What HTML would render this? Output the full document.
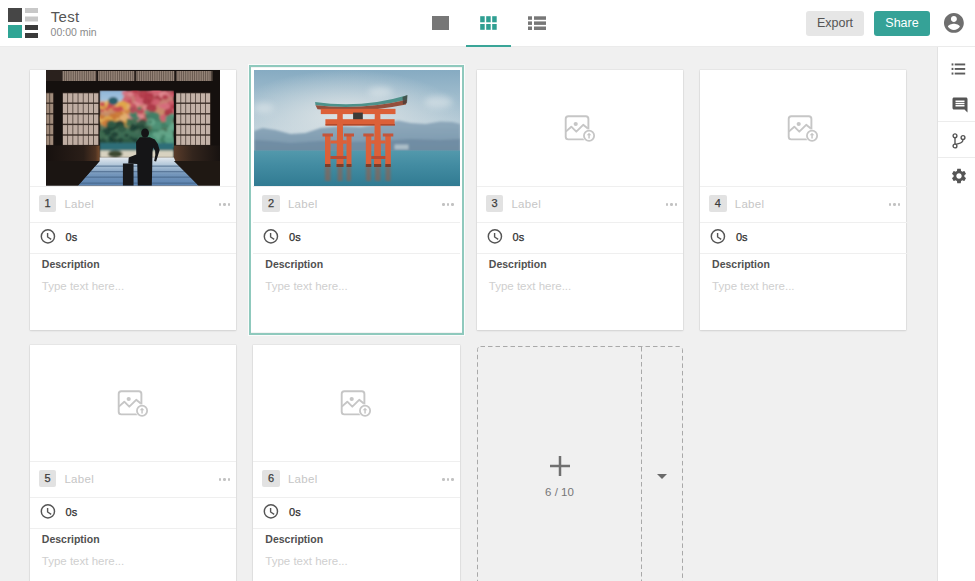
<!DOCTYPE html>
<html><head><meta charset="utf-8">
<style>
*{margin:0;padding:0;box-sizing:border-box}
html,body{width:975px;height:581px;overflow:hidden;background:#f0f0f0;font-family:"Liberation Sans",sans-serif;position:relative}
.hdr{position:absolute;left:0;top:0;width:975px;height:47px;background:#fff;border-bottom:1px solid #ebebeb}
.logo{position:absolute}
.title{position:absolute;left:50.8px;top:8px;font-size:15px;color:#555;line-height:18px;letter-spacing:0.25px}
.sub{position:absolute;left:50.6px;top:26px;font-size:10.5px;color:#8a8a8a;line-height:12px}
.vi{position:absolute}
.uline{position:absolute;left:466px;top:44.5px;width:45px;height:2px;background:#3aa598}
.btn{position:absolute;top:10.7px;height:25px;border-radius:3px;font-size:12.5px;line-height:24.5px;text-align:center}
.exp{left:806px;width:58px;background:#e6e6e6;color:#555}
.shr{left:874px;width:56px;background:#35a297;color:#fff}
.side{position:absolute;left:937px;top:47px;width:38px;height:534px;background:#fff;border-left:1px solid #e2e2e2}
.sside{position:absolute;left:0;width:37px;height:1px;background:#ececec}
.card{position:absolute;width:206.3px;height:260.6px;background:#fff;box-shadow:0 0 0 0.5px rgba(0,0,0,0.07),0 1px 2px rgba(0,0,0,0.1)}

.card.sel{box-shadow:0 0 0 2.2px #fff}
.card.sel::after{content:"";position:absolute;left:-4.5px;top:-4.5px;right:-4.5px;bottom:-4.5px;border:2.5px solid #8fc9bd;box-shadow:0 0 0 1px rgba(255,255,255,0.7)}
.card.sel .img{left:0.5px;width:206px}
.img{position:absolute;left:0;top:0.5px;width:206.5px;height:115.5px;overflow:hidden}
.ph{position:absolute;left:83px;top:40.5px}
.sep{position:absolute;left:0;width:206.5px;height:1px;background:#efefef}
.badge{position:absolute;left:9px;top:125px;width:17.5px;height:17.5px;border-radius:2px;background:#e2e2e2;color:#3c3c3c;font-size:11px;-webkit-text-stroke:0.25px #3c3c3c;line-height:17.5px;text-align:center}
.lbl{position:absolute;left:34.6px;top:127px;font-size:11.5px;line-height:14px;color:#c6c6c6;letter-spacing:0.3px}
.dots{position:absolute;left:188.85px;top:133.6px;width:12px;height:2.5px}
.dots i{position:absolute;top:0;width:2.5px;height:2.5px;border-radius:1.25px;background:#c2c2c2}
.dots i:nth-child(1){left:0}.dots i:nth-child(2){left:4.4px}.dots i:nth-child(3){left:9px}
.clk{position:absolute;left:9px;top:158.5px}
.dur{position:absolute;left:35.8px;top:160px;font-size:11px;line-height:14px;color:#2e2e2e;-webkit-text-stroke:0.25px #2e2e2e}
.dh{position:absolute;left:12px;top:187.5px;font-size:10.5px;line-height:14px;color:#505050;font-weight:bold}
.dt{position:absolute;left:12px;top:209px;font-size:11.5px;line-height:14px;color:#cfcfcf}
.add{position:absolute;left:477px;top:345.5px;width:207px;height:240px}
.add .div{position:absolute;left:164px;top:0;width:0;height:300px;border-left:1px dashed #b5b5b5}
.plus{position:absolute}
.cnt{position:absolute;left:0.5px;width:164px;top:139px;text-align:center;font-size:11.5px;line-height:14px;color:#777}
.tri{position:absolute;left:180px;top:128.5px;width:0;height:0;border-left:5px solid transparent;border-right:5px solid transparent;border-top:5px solid #6a6a6a}
</style></head>
<body>
<div class="hdr">
  <svg class="logo" style="left:8px;top:8px" width="31" height="31" viewBox="0 0 31 31">
    <rect x="0" y="0" width="14" height="14" fill="#464646"/>
    <rect x="0" y="17" width="14" height="13" fill="#2fa595"/>
    <rect x="17" y="0" width="13" height="5" fill="#c8c8c8"/>
    <rect x="17" y="8.5" width="13" height="5" fill="#c8c8c8"/>
    <rect x="17" y="17" width="13" height="5" fill="#3a3a3a"/>
    <rect x="17" y="25" width="13" height="5" fill="#3a3a3a"/>
  </svg>
  <div class="title">Test</div>
  <div class="sub">00:00 min</div>
  <svg class="vi" style="left:432px;top:16px" width="17" height="14"><rect width="17" height="14" fill="#777"/></svg>
  <svg class="vi" style="left:480px;top:16px" width="17" height="14" fill="#2f9f92"><rect x="0.2" y="0.2" width="4.5" height="6.1"/><rect x="6.2" y="0.2" width="4.5" height="6.1"/><rect x="12.2" y="0.2" width="4.5" height="6.1"/><rect x="0.2" y="8" width="4.5" height="5.8"/><rect x="6.2" y="8" width="4.5" height="5.8"/><rect x="12.2" y="8" width="4.5" height="5.8"/></svg>
  <svg class="vi" style="left:528px;top:16px" width="18" height="14" fill="#777">
    <rect x="0" y="0.3" width="4" height="3.5"/><rect x="6" y="0.3" width="12" height="3.5"/>
    <rect x="0" y="5.4" width="4" height="3.5"/><rect x="6" y="5.4" width="12" height="3.5"/>
    <rect x="0" y="10.5" width="4" height="3.5"/><rect x="6" y="10.5" width="12" height="3.5"/>
  </svg>
  <div class="uline"></div>
  <div class="btn exp">Export</div>
  <div class="btn shr">Share</div>
  <svg class="vi" style="left:942.1px;top:11.3px" width="23.8" height="23.8" viewBox="0 0 24 24"><path fill="#6f6f6f" d="M12 2C6.48 2 2 6.48 2 12s4.48 10 10 10 10-4.48 10-10S17.52 2 12 2zm0 3c1.66 0 3 1.34 3 3s-1.34 3-3 3-3-1.34-3-3 1.34-3 3-3zm0 14.2c-2.5 0-4.71-1.28-6-3.22.03-1.99 4-3.08 6-3.08 1.99 0 5.97 1.09 6 3.08-1.29 1.94-3.5 3.22-6 3.22z"/></svg>
</div>
<div class="side">
  <svg class="vi" style="left:13px;top:15.5px" width="16" height="12" fill="#5c5c5c"><rect x="0.6" y="0.4" width="1.8" height="2.1"/><rect x="3.7" y="0.5" width="10.5" height="1.9"/><rect x="0.6" y="4.9" width="1.8" height="2.1"/><rect x="3.7" y="5" width="10.5" height="1.9"/><rect x="0.6" y="9.5" width="1.8" height="2.1"/><rect x="3.7" y="9.6" width="10.5" height="1.9"/></svg>
  <svg class="vi" style="left:12.5px;top:48.5px" width="18" height="18" viewBox="0 0 24 24"><path fill="#555" d="M20 2H4c-1.1 0-2 .9-2 2v12c0 1.1.9 2 2 2h14l4 4V4c0-1.1-.9-2-2-2zm-2 12H6v-2h12v2zm0-3H6V9h12v2zm0-3H6V6h12v2z"/></svg>
  <div class="sside" style="top:73.5px"></div>
  <svg class="vi" style="left:13.5px;top:85.8px" width="14" height="16" viewBox="0 0 14 16"><g fill="none" stroke="#555" stroke-width="1.4"><circle cx="3" cy="2.8" r="1.9"/><circle cx="3" cy="13" r="1.9"/><circle cx="11" cy="4.5" r="1.9"/><path d="M3 4.7v6.4M11 6.4c0 3-2 3.6-4.5 4.2L3.6 11.4"/></g></svg>
  <div class="sside" style="top:110px"></div>
  <svg class="vi" style="left:11.6px;top:120.3px" width="18" height="18" viewBox="0 0 24 24"><path fill="#555" d="M19.14 12.94c.04-.3.06-.61.06-.94 0-.32-.02-.64-.07-.94l2.03-1.58c.18-.14.23-.41.12-.61l-1.92-3.32c-.12-.22-.37-.29-.59-.22l-2.39.96c-.5-.38-1.03-.7-1.62-.94l-.36-2.54c-.04-.24-.24-.41-.48-.41h-3.84c-.24 0-.43.17-.47.41l-.36 2.54c-.59.24-1.13.57-1.62.94l-2.39-.96c-.22-.08-.47 0-.59.22L2.74 8.87c-.12.21-.08.47.12.61l2.03 1.58c-.05.3-.09.63-.09.94s.02.64.07.94l-2.03 1.58c-.18.14-.23.41-.12.61l1.920 3.32c.12.22.37.29.59.22l2.39-.96c.5.38 1.03.7 1.620.94l.36 2.54c.05.24.24.41.48.41h3.84c.24 0 .44-.17.47-.41l.36-2.54c.59-.24 1.13-.56 1.62-.94l2.39.96c.22.08.47 0 .59-.22l1.92-3.32c.12-.22.07-.47-.12-.61l-2.01-1.58zM12 15.6c-1.98 0-3.6-1.62-3.6-3.6s1.62-3.6 3.6-3.6 3.6 1.62 3.6 3.6-1.62 3.6-3.6 3.6z"/></svg>
</div>
<div class="card" style="left:29.8px;top:69.5px">
  <div class="img"><svg width="174.5" height="116" viewBox="0 0 174 116" preserveAspectRatio="none" style="position:absolute;left:16px;top:0"><defs><linearGradient id="p1sky" x1="0" y1="0" x2="0" y2="1"><stop offset="0" stop-color="#8fb6d8"/><stop offset="1" stop-color="#b5cde0"/></linearGradient><linearGradient id="p1wallL" x1="0" y1="0" x2="1" y2="0"><stop offset="0" stop-color="#17110f"/><stop offset="0.7" stop-color="#2a1e18"/><stop offset="0.92" stop-color="#4e3322"/><stop offset="1" stop-color="#7a4e2e"/></linearGradient><linearGradient id="p1wallR" x1="0" y1="0" x2="1" y2="0"><stop offset="0" stop-color="#5a3c2a"/><stop offset="0.4" stop-color="#33251d"/><stop offset="1" stop-color="#171210"/></linearGradient><linearGradient id="p1floor" x1="0" y1="0" x2="0" y2="1"><stop offset="0" stop-color="#e4e9ee"/><stop offset="0.25" stop-color="#b4c8da"/><stop offset="0.6" stop-color="#7496bb"/><stop offset="1" stop-color="#5a82b0"/></linearGradient><linearGradient id="p1trees" x1="0" y1="0" x2="0" y2="1"><stop offset="0" stop-color="#c8707a"/><stop offset="0.35" stop-color="#c98f6a"/><stop offset="0.6" stop-color="#3f6f55"/><stop offset="1" stop-color="#2a5a4a"/></linearGradient><clipPath id="p1clip"><rect x="53.5" y="20.5" width="74" height="67.5"/></clipPath><filter id="p1blur" x="-10%" y="-10%" width="120%" height="120%"><feGaussianBlur stdDeviation="1.2"/></filter></defs><rect x="0.00" y="0.00" width="174.00" height="115.50" fill="#15100e" /><rect x="0.00" y="0.00" width="16.50" height="11.00" fill="#2a211d" /><rect x="16.50" y="1.00" width="148.50" height="10.00" fill="#948377" /><rect x="18.00" y="1.00" width="0.70" height="10.00" fill="#5a4c43" /><rect x="20.20" y="1.00" width="0.70" height="10.00" fill="#5a4c43" /><rect x="22.40" y="1.00" width="0.70" height="10.00" fill="#5a4c43" /><rect x="24.60" y="1.00" width="0.70" height="10.00" fill="#5a4c43" /><rect x="26.80" y="1.00" width="0.70" height="10.00" fill="#5a4c43" /><rect x="29.00" y="1.00" width="0.70" height="10.00" fill="#5a4c43" /><rect x="31.20" y="1.00" width="0.70" height="10.00" fill="#5a4c43" /><rect x="33.40" y="1.00" width="0.70" height="10.00" fill="#5a4c43" /><rect x="35.60" y="1.00" width="0.70" height="10.00" fill="#5a4c43" /><rect x="37.80" y="1.00" width="0.70" height="10.00" fill="#5a4c43" /><rect x="40.00" y="1.00" width="0.70" height="10.00" fill="#5a4c43" /><rect x="42.20" y="1.00" width="0.70" height="10.00" fill="#5a4c43" /><rect x="44.40" y="1.00" width="0.70" height="10.00" fill="#5a4c43" /><rect x="46.60" y="1.00" width="0.70" height="10.00" fill="#5a4c43" /><rect x="48.80" y="1.00" width="0.70" height="10.00" fill="#5a4c43" /><rect x="51.00" y="1.00" width="0.70" height="10.00" fill="#5a4c43" /><rect x="53.20" y="1.00" width="0.70" height="10.00" fill="#5a4c43" /><rect x="55.40" y="1.00" width="0.70" height="10.00" fill="#5a4c43" /><rect x="57.60" y="1.00" width="0.70" height="10.00" fill="#5a4c43" /><rect x="59.80" y="1.00" width="0.70" height="10.00" fill="#5a4c43" /><rect x="62.00" y="1.00" width="0.70" height="10.00" fill="#5a4c43" /><rect x="64.20" y="1.00" width="0.70" height="10.00" fill="#5a4c43" /><rect x="66.40" y="1.00" width="0.70" height="10.00" fill="#5a4c43" /><rect x="68.60" y="1.00" width="0.70" height="10.00" fill="#5a4c43" /><rect x="70.80" y="1.00" width="0.70" height="10.00" fill="#5a4c43" /><rect x="73.00" y="1.00" width="0.70" height="10.00" fill="#5a4c43" /><rect x="75.20" y="1.00" width="0.70" height="10.00" fill="#5a4c43" /><rect x="77.40" y="1.00" width="0.70" height="10.00" fill="#5a4c43" /><rect x="79.60" y="1.00" width="0.70" height="10.00" fill="#5a4c43" /><rect x="81.80" y="1.00" width="0.70" height="10.00" fill="#5a4c43" /><rect x="84.00" y="1.00" width="0.70" height="10.00" fill="#5a4c43" /><rect x="86.20" y="1.00" width="0.70" height="10.00" fill="#5a4c43" /><rect x="88.40" y="1.00" width="0.70" height="10.00" fill="#5a4c43" /><rect x="90.60" y="1.00" width="0.70" height="10.00" fill="#5a4c43" /><rect x="92.80" y="1.00" width="0.70" height="10.00" fill="#5a4c43" /><rect x="95.00" y="1.00" width="0.70" height="10.00" fill="#5a4c43" /><rect x="97.20" y="1.00" width="0.70" height="10.00" fill="#5a4c43" /><rect x="99.40" y="1.00" width="0.70" height="10.00" fill="#5a4c43" /><rect x="101.60" y="1.00" width="0.70" height="10.00" fill="#5a4c43" /><rect x="103.80" y="1.00" width="0.70" height="10.00" fill="#5a4c43" /><rect x="106.00" y="1.00" width="0.70" height="10.00" fill="#5a4c43" /><rect x="108.20" y="1.00" width="0.70" height="10.00" fill="#5a4c43" /><rect x="110.40" y="1.00" width="0.70" height="10.00" fill="#5a4c43" /><rect x="112.60" y="1.00" width="0.70" height="10.00" fill="#5a4c43" /><rect x="114.80" y="1.00" width="0.70" height="10.00" fill="#5a4c43" /><rect x="117.00" y="1.00" width="0.70" height="10.00" fill="#5a4c43" /><rect x="119.20" y="1.00" width="0.70" height="10.00" fill="#5a4c43" /><rect x="121.40" y="1.00" width="0.70" height="10.00" fill="#5a4c43" /><rect x="123.60" y="1.00" width="0.70" height="10.00" fill="#5a4c43" /><rect x="125.80" y="1.00" width="0.70" height="10.00" fill="#5a4c43" /><rect x="128.00" y="1.00" width="0.70" height="10.00" fill="#5a4c43" /><rect x="130.20" y="1.00" width="0.70" height="10.00" fill="#5a4c43" /><rect x="132.40" y="1.00" width="0.70" height="10.00" fill="#5a4c43" /><rect x="134.60" y="1.00" width="0.70" height="10.00" fill="#5a4c43" /><rect x="136.80" y="1.00" width="0.70" height="10.00" fill="#5a4c43" /><rect x="139.00" y="1.00" width="0.70" height="10.00" fill="#5a4c43" /><rect x="141.20" y="1.00" width="0.70" height="10.00" fill="#5a4c43" /><rect x="143.40" y="1.00" width="0.70" height="10.00" fill="#5a4c43" /><rect x="145.60" y="1.00" width="0.70" height="10.00" fill="#5a4c43" /><rect x="147.80" y="1.00" width="0.70" height="10.00" fill="#5a4c43" /><rect x="150.00" y="1.00" width="0.70" height="10.00" fill="#5a4c43" /><rect x="152.20" y="1.00" width="0.70" height="10.00" fill="#5a4c43" /><rect x="154.40" y="1.00" width="0.70" height="10.00" fill="#5a4c43" /><rect x="156.60" y="1.00" width="0.70" height="10.00" fill="#5a4c43" /><rect x="158.80" y="1.00" width="0.70" height="10.00" fill="#5a4c43" /><rect x="161.00" y="1.00" width="0.70" height="10.00" fill="#5a4c43" /><rect x="163.20" y="1.00" width="0.70" height="10.00" fill="#5a4c43" /><rect x="165.40" y="1.00" width="0.70" height="10.00" fill="#5a4c43" /><rect x="50.00" y="1.00" width="2.00" height="10.00" fill="#1e1714" /><rect x="128.00" y="1.00" width="2.00" height="10.00" fill="#1e1714" /><rect x="88.00" y="1.00" width="2.00" height="10.00" fill="#2a211c" /><rect x="0.00" y="22.50" width="7.50" height="53.00" fill="#3b2f28" /><rect x="0.35" y="23.30" width="3.05" height="9.20" fill="#a08b7b" /><rect x="0.35" y="33.90" width="3.05" height="9.20" fill="#a08b7b" /><rect x="0.35" y="44.50" width="3.05" height="9.20" fill="#a08b7b" /><rect x="0.35" y="55.10" width="3.05" height="9.20" fill="#a08b7b" /><rect x="0.35" y="65.70" width="3.05" height="9.20" fill="#a08b7b" /><rect x="4.10" y="23.30" width="3.05" height="9.20" fill="#a08b7b" /><rect x="4.10" y="33.90" width="3.05" height="9.20" fill="#a08b7b" /><rect x="4.10" y="44.50" width="3.05" height="9.20" fill="#a08b7b" /><rect x="4.10" y="55.10" width="3.05" height="9.20" fill="#a08b7b" /><rect x="4.10" y="65.70" width="3.05" height="9.20" fill="#a08b7b" /><rect x="16.50" y="22.50" width="36.00" height="53.00" fill="#3b2f28" /><rect x="16.85" y="23.30" width="4.44" height="9.20" fill="#bfada2" /><rect x="16.85" y="33.90" width="4.44" height="9.20" fill="#bfada2" /><rect x="16.85" y="44.50" width="4.44" height="9.20" fill="#bfada2" /><rect x="16.85" y="55.10" width="4.44" height="9.20" fill="#bfada2" /><rect x="16.85" y="65.70" width="4.44" height="9.20" fill="#bfada2" /><rect x="21.99" y="23.30" width="4.44" height="9.20" fill="#bfada2" /><rect x="21.99" y="33.90" width="4.44" height="9.20" fill="#bfada2" /><rect x="21.99" y="44.50" width="4.44" height="9.20" fill="#bfada2" /><rect x="21.99" y="55.10" width="4.44" height="9.20" fill="#bfada2" /><rect x="21.99" y="65.70" width="4.44" height="9.20" fill="#bfada2" /><rect x="27.14" y="23.30" width="4.44" height="9.20" fill="#bfada2" /><rect x="27.14" y="33.90" width="4.44" height="9.20" fill="#bfada2" /><rect x="27.14" y="44.50" width="4.44" height="9.20" fill="#bfada2" /><rect x="27.14" y="55.10" width="4.44" height="9.20" fill="#bfada2" /><rect x="27.14" y="65.70" width="4.44" height="9.20" fill="#bfada2" /><rect x="32.28" y="23.30" width="4.44" height="9.20" fill="#bfada2" /><rect x="32.28" y="33.90" width="4.44" height="9.20" fill="#bfada2" /><rect x="32.28" y="44.50" width="4.44" height="9.20" fill="#bfada2" /><rect x="32.28" y="55.10" width="4.44" height="9.20" fill="#bfada2" /><rect x="32.28" y="65.70" width="4.44" height="9.20" fill="#bfada2" /><rect x="37.42" y="23.30" width="4.44" height="9.20" fill="#bfada2" /><rect x="37.42" y="33.90" width="4.44" height="9.20" fill="#bfada2" /><rect x="37.42" y="44.50" width="4.44" height="9.20" fill="#bfada2" /><rect x="37.42" y="55.10" width="4.44" height="9.20" fill="#bfada2" /><rect x="37.42" y="65.70" width="4.44" height="9.20" fill="#bfada2" /><rect x="42.56" y="23.30" width="4.44" height="9.20" fill="#bfada2" /><rect x="42.56" y="33.90" width="4.44" height="9.20" fill="#bfada2" /><rect x="42.56" y="44.50" width="4.44" height="9.20" fill="#bfada2" /><rect x="42.56" y="55.10" width="4.44" height="9.20" fill="#bfada2" /><rect x="42.56" y="65.70" width="4.44" height="9.20" fill="#bfada2" /><rect x="47.71" y="23.30" width="4.44" height="9.20" fill="#bfada2" /><rect x="47.71" y="33.90" width="4.44" height="9.20" fill="#bfada2" /><rect x="47.71" y="44.50" width="4.44" height="9.20" fill="#bfada2" /><rect x="47.71" y="55.10" width="4.44" height="9.20" fill="#bfada2" /><rect x="47.71" y="65.70" width="4.44" height="9.20" fill="#bfada2" /><rect x="129.50" y="22.50" width="34.50" height="53.00" fill="#3b2f28" /><rect x="129.85" y="23.30" width="4.23" height="9.20" fill="#c3b2a7" /><rect x="129.85" y="33.90" width="4.23" height="9.20" fill="#c3b2a7" /><rect x="129.85" y="44.50" width="4.23" height="9.20" fill="#c3b2a7" /><rect x="129.85" y="55.10" width="4.23" height="9.20" fill="#c3b2a7" /><rect x="129.85" y="65.70" width="4.23" height="9.20" fill="#c3b2a7" /><rect x="134.78" y="23.30" width="4.23" height="9.20" fill="#c3b2a7" /><rect x="134.78" y="33.90" width="4.23" height="9.20" fill="#c3b2a7" /><rect x="134.78" y="44.50" width="4.23" height="9.20" fill="#c3b2a7" /><rect x="134.78" y="55.10" width="4.23" height="9.20" fill="#c3b2a7" /><rect x="134.78" y="65.70" width="4.23" height="9.20" fill="#c3b2a7" /><rect x="139.71" y="23.30" width="4.23" height="9.20" fill="#c3b2a7" /><rect x="139.71" y="33.90" width="4.23" height="9.20" fill="#c3b2a7" /><rect x="139.71" y="44.50" width="4.23" height="9.20" fill="#c3b2a7" /><rect x="139.71" y="55.10" width="4.23" height="9.20" fill="#c3b2a7" /><rect x="139.71" y="65.70" width="4.23" height="9.20" fill="#c3b2a7" /><rect x="144.64" y="23.30" width="4.23" height="9.20" fill="#c3b2a7" /><rect x="144.64" y="33.90" width="4.23" height="9.20" fill="#c3b2a7" /><rect x="144.64" y="44.50" width="4.23" height="9.20" fill="#c3b2a7" /><rect x="144.64" y="55.10" width="4.23" height="9.20" fill="#c3b2a7" /><rect x="144.64" y="65.70" width="4.23" height="9.20" fill="#c3b2a7" /><rect x="149.56" y="23.30" width="4.23" height="9.20" fill="#c3b2a7" /><rect x="149.56" y="33.90" width="4.23" height="9.20" fill="#c3b2a7" /><rect x="149.56" y="44.50" width="4.23" height="9.20" fill="#c3b2a7" /><rect x="149.56" y="55.10" width="4.23" height="9.20" fill="#c3b2a7" /><rect x="149.56" y="65.70" width="4.23" height="9.20" fill="#c3b2a7" /><rect x="154.49" y="23.30" width="4.23" height="9.20" fill="#c3b2a7" /><rect x="154.49" y="33.90" width="4.23" height="9.20" fill="#c3b2a7" /><rect x="154.49" y="44.50" width="4.23" height="9.20" fill="#c3b2a7" /><rect x="154.49" y="55.10" width="4.23" height="9.20" fill="#c3b2a7" /><rect x="154.49" y="65.70" width="4.23" height="9.20" fill="#c3b2a7" /><rect x="159.42" y="23.30" width="4.23" height="9.20" fill="#c3b2a7" /><rect x="159.42" y="33.90" width="4.23" height="9.20" fill="#c3b2a7" /><rect x="159.42" y="44.50" width="4.23" height="9.20" fill="#c3b2a7" /><rect x="159.42" y="55.10" width="4.23" height="9.20" fill="#c3b2a7" /><rect x="159.42" y="65.70" width="4.23" height="9.20" fill="#c3b2a7" /><rect x="0.00" y="75.50" width="53.50" height="15.50" fill="url(#p1wallL)" /><rect x="127.50" y="75.50" width="46.50" height="15.50" fill="url(#p1wallR)" /><g clip-path="url(#p1clip)" filter="url(#p1blur)"><rect x="53.50" y="20.50" width="74.00" height="67.50" fill="url(#p1trees)" /><polygon points="53.50,20.50 79.00,20.50 76.00,27.00 64.00,34.00 53.50,38.00" fill="url(#p1sky)" /><polygon points="53.50,20.50 80.00,20.50 76.00,30.00 66.00,36.00 53.50,38.00" fill="url(#p1sky)" /><ellipse cx="92.16" cy="25.13" rx="4.28" ry="3.42" fill="#c24a58" opacity="0.90"/><ellipse cx="118.53" cy="23.20" rx="4.04" ry="3.23" fill="#a83545" opacity="0.90"/><ellipse cx="86.38" cy="22.92" rx="3.46" ry="2.77" fill="#d06070" opacity="0.90"/><ellipse cx="79.81" cy="34.43" rx="4.89" ry="3.92" fill="#c24a58" opacity="0.90"/><ellipse cx="125.21" cy="41.44" rx="4.04" ry="3.23" fill="#c24a58" opacity="0.90"/><ellipse cx="105.59" cy="33.49" rx="5.42" ry="4.33" fill="#c24a58" opacity="0.90"/><ellipse cx="104.50" cy="24.53" rx="3.47" ry="2.77" fill="#a83545" opacity="0.90"/><ellipse cx="81.24" cy="30.49" rx="4.86" ry="3.89" fill="#d06070" opacity="0.90"/><ellipse cx="80.46" cy="39.42" rx="2.66" ry="2.13" fill="#c24a58" opacity="0.90"/><ellipse cx="104.03" cy="22.13" rx="2.21" ry="1.77" fill="#d06070" opacity="0.90"/><ellipse cx="101.31" cy="38.08" rx="4.72" ry="3.78" fill="#e08890" opacity="0.90"/><ellipse cx="106.03" cy="35.41" rx="3.05" ry="2.44" fill="#d06070" opacity="0.90"/><ellipse cx="112.05" cy="28.30" rx="4.01" ry="3.21" fill="#a83545" opacity="0.90"/><ellipse cx="101.24" cy="31.68" rx="3.57" ry="2.86" fill="#a83545" opacity="0.90"/><ellipse cx="126.95" cy="24.01" rx="3.46" ry="2.77" fill="#b03848" opacity="0.90"/><ellipse cx="83.06" cy="36.62" rx="2.14" ry="1.71" fill="#d87080" opacity="0.90"/><ellipse cx="79.11" cy="38.97" rx="4.76" ry="3.81" fill="#b03848" opacity="0.90"/><ellipse cx="93.03" cy="31.91" rx="3.74" ry="2.99" fill="#e08890" opacity="0.90"/><ellipse cx="78.64" cy="23.18" rx="2.94" ry="2.36" fill="#d87080" opacity="0.90"/><ellipse cx="110.20" cy="22.06" rx="4.46" ry="3.56" fill="#d87080" opacity="0.90"/><ellipse cx="105.63" cy="43.16" rx="3.56" ry="2.85" fill="#d87080" opacity="0.90"/><ellipse cx="95.45" cy="42.73" rx="2.08" ry="1.66" fill="#e08890" opacity="0.90"/><ellipse cx="93.84" cy="40.77" rx="3.73" ry="2.98" fill="#d06070" opacity="0.90"/><ellipse cx="115.72" cy="24.40" rx="2.87" ry="2.29" fill="#e08890" opacity="0.90"/><ellipse cx="123.59" cy="36.88" rx="2.58" ry="2.07" fill="#e08890" opacity="0.90"/><ellipse cx="104.12" cy="50.04" rx="4.87" ry="3.89" fill="#a83545" opacity="0.90"/><ellipse cx="89.76" cy="34.12" rx="3.26" ry="2.60" fill="#e08890" opacity="0.90"/><ellipse cx="125.76" cy="25.13" rx="2.62" ry="2.09" fill="#d06070" opacity="0.90"/><ellipse cx="109.90" cy="20.41" rx="4.91" ry="3.93" fill="#d06070" opacity="0.90"/><ellipse cx="88.93" cy="20.14" rx="3.47" ry="2.77" fill="#b03848" opacity="0.90"/><ellipse cx="107.32" cy="30.83" rx="2.44" ry="1.95" fill="#a83545" opacity="0.90"/><ellipse cx="125.36" cy="42.27" rx="4.59" ry="3.67" fill="#e08890" opacity="0.90"/><ellipse cx="122.68" cy="46.52" rx="5.06" ry="4.05" fill="#a83545" opacity="0.90"/><ellipse cx="95.80" cy="33.57" rx="2.36" ry="1.89" fill="#d87080" opacity="0.90"/><ellipse cx="96.22" cy="26.48" rx="5.45" ry="4.36" fill="#e08890" opacity="0.90"/><ellipse cx="83.60" cy="31.56" rx="2.18" ry="1.75" fill="#c24a58" opacity="0.90"/><ellipse cx="105.04" cy="38.25" rx="5.32" ry="4.26" fill="#a83545" opacity="0.90"/><ellipse cx="76.35" cy="49.73" rx="4.15" ry="3.32" fill="#d06070" opacity="0.90"/><ellipse cx="108.62" cy="52.49" rx="4.11" ry="3.29" fill="#e08890" opacity="0.90"/><ellipse cx="81.51" cy="48.86" rx="5.48" ry="4.38" fill="#e08890" opacity="0.90"/><ellipse cx="100.46" cy="30.60" rx="2.50" ry="2.00" fill="#d87080" opacity="0.90"/><ellipse cx="93.16" cy="29.00" rx="4.90" ry="3.92" fill="#d06070" opacity="0.90"/><ellipse cx="102.37" cy="26.98" rx="5.33" ry="4.27" fill="#b03848" opacity="0.90"/><ellipse cx="82.77" cy="38.47" rx="2.09" ry="1.68" fill="#a83545" opacity="0.90"/><ellipse cx="90.80" cy="41.86" rx="2.32" ry="1.85" fill="#b03848" opacity="0.90"/><ellipse cx="102.48" cy="50.88" rx="3.24" ry="2.60" fill="#d06070" opacity="0.90"/><ellipse cx="103.23" cy="46.49" rx="3.15" ry="2.52" fill="#d06070" opacity="0.90"/><ellipse cx="107.50" cy="46.81" rx="4.65" ry="3.72" fill="#d06070" opacity="0.90"/><ellipse cx="117.72" cy="47.82" rx="4.59" ry="3.67" fill="#d06070" opacity="0.90"/><ellipse cx="85.60" cy="36.75" rx="4.56" ry="3.65" fill="#c24a58" opacity="0.90"/><ellipse cx="116.88" cy="36.06" rx="2.68" ry="2.14" fill="#a83545" opacity="0.90"/><ellipse cx="125.70" cy="35.21" rx="5.28" ry="4.22" fill="#b03848" opacity="0.90"/><ellipse cx="125.62" cy="32.40" rx="2.77" ry="2.22" fill="#d06070" opacity="0.90"/><ellipse cx="99.91" cy="31.48" rx="3.69" ry="2.95" fill="#a83545" opacity="0.90"/><ellipse cx="119.54" cy="36.30" rx="4.29" ry="3.43" fill="#d87080" opacity="0.90"/><ellipse cx="79.49" cy="42.46" rx="5.18" ry="4.15" fill="#d87080" opacity="0.90"/><ellipse cx="114.76" cy="36.25" rx="2.62" ry="2.10" fill="#d87080" opacity="0.90"/><ellipse cx="92.62" cy="47.23" rx="5.40" ry="4.32" fill="#e08890" opacity="0.90"/><ellipse cx="99.55" cy="45.27" rx="2.30" ry="1.84" fill="#d06070" opacity="0.90"/><ellipse cx="84.01" cy="24.32" rx="2.53" ry="2.02" fill="#e08890" opacity="0.90"/><ellipse cx="117.74" cy="24.97" rx="4.89" ry="3.91" fill="#e08890" opacity="0.90"/><ellipse cx="109.84" cy="31.91" rx="3.92" ry="3.14" fill="#d06070" opacity="0.90"/><ellipse cx="76.13" cy="47.18" rx="4.54" ry="3.63" fill="#c24a58" opacity="0.90"/><ellipse cx="102.91" cy="51.74" rx="3.52" ry="2.81" fill="#d06070" opacity="0.90"/><ellipse cx="118.79" cy="27.18" rx="2.88" ry="2.31" fill="#b03848" opacity="0.90"/><ellipse cx="101.56" cy="45.97" rx="3.14" ry="2.51" fill="#a83545" opacity="0.90"/><ellipse cx="97.21" cy="24.46" rx="5.19" ry="4.15" fill="#b03848" opacity="0.90"/><ellipse cx="122.58" cy="42.52" rx="4.85" ry="3.88" fill="#a83545" opacity="0.90"/><ellipse cx="97.29" cy="51.20" rx="3.76" ry="3.00" fill="#a83545" opacity="0.90"/><ellipse cx="83.05" cy="37.36" rx="5.05" ry="4.04" fill="#d06070" opacity="0.90"/><ellipse cx="71.04" cy="49.30" rx="2.45" ry="1.96" fill="#e8bb60" opacity="0.90"/><ellipse cx="67.26" cy="48.23" rx="3.67" ry="2.94" fill="#d08a40" opacity="0.90"/><ellipse cx="73.11" cy="44.15" rx="3.45" ry="2.76" fill="#e0a548" opacity="0.90"/><ellipse cx="78.73" cy="34.19" rx="2.57" ry="2.06" fill="#e0a548" opacity="0.90"/><ellipse cx="75.62" cy="43.66" rx="3.69" ry="2.95" fill="#e0a548" opacity="0.90"/><ellipse cx="66.41" cy="45.86" rx="3.52" ry="2.81" fill="#c97838" opacity="0.90"/><ellipse cx="59.58" cy="38.82" rx="3.52" ry="2.82" fill="#e2b070" opacity="0.90"/><ellipse cx="68.22" cy="38.20" rx="3.57" ry="2.86" fill="#d08a40" opacity="0.90"/><ellipse cx="79.84" cy="51.75" rx="2.61" ry="2.09" fill="#e2b070" opacity="0.90"/><ellipse cx="57.84" cy="35.55" rx="3.33" ry="2.66" fill="#e0a548" opacity="0.90"/><ellipse cx="72.79" cy="42.00" rx="2.64" ry="2.11" fill="#d08a40" opacity="0.90"/><ellipse cx="75.95" cy="51.84" rx="2.46" ry="1.97" fill="#d08a40" opacity="0.90"/><ellipse cx="58.00" cy="51.54" rx="4.90" ry="3.92" fill="#e8bb60" opacity="0.90"/><ellipse cx="74.91" cy="34.98" rx="4.65" ry="3.72" fill="#e8bb60" opacity="0.90"/><ellipse cx="81.72" cy="50.48" rx="2.48" ry="1.99" fill="#e2b070" opacity="0.90"/><ellipse cx="81.83" cy="41.48" rx="3.26" ry="2.61" fill="#d08a40" opacity="0.90"/><ellipse cx="62.92" cy="48.17" rx="2.06" ry="1.65" fill="#c97838" opacity="0.90"/><ellipse cx="66.84" cy="47.77" rx="3.15" ry="2.52" fill="#c97838" opacity="0.90"/><ellipse cx="71.47" cy="43.76" rx="2.19" ry="1.75" fill="#e8bb60" opacity="0.90"/><ellipse cx="81.21" cy="35.20" rx="2.80" ry="2.24" fill="#e0a548" opacity="0.90"/><ellipse cx="79.37" cy="36.81" rx="4.27" ry="3.41" fill="#e2b070" opacity="0.90"/><ellipse cx="77.79" cy="47.20" rx="4.84" ry="3.87" fill="#e2b070" opacity="0.90"/><ellipse cx="58.18" cy="52.30" rx="3.71" ry="2.97" fill="#d08a40" opacity="0.90"/><ellipse cx="56.50" cy="34.21" rx="4.06" ry="3.25" fill="#e2b070" opacity="0.90"/><ellipse cx="79.07" cy="38.65" rx="2.05" ry="1.64" fill="#e0a548" opacity="0.90"/><ellipse cx="76.45" cy="34.76" rx="4.57" ry="3.65" fill="#e0a548" opacity="0.90"/><ellipse cx="61.40" cy="35.56" rx="2.03" ry="1.63" fill="#c97838" opacity="0.90"/><ellipse cx="65.70" cy="52.22" rx="3.87" ry="3.09" fill="#e0a548" opacity="0.90"/><ellipse cx="68.75" cy="38.01" rx="2.33" ry="1.86" fill="#e8bb60" opacity="0.90"/><ellipse cx="61.33" cy="36.80" rx="4.80" ry="3.84" fill="#d08a40" opacity="0.90"/><ellipse cx="68.87" cy="37.32" rx="3.34" ry="2.67" fill="#e8bb60" opacity="0.90"/><ellipse cx="61.57" cy="49.88" rx="4.98" ry="3.99" fill="#e0a548" opacity="0.90"/><ellipse cx="54.43" cy="48.39" rx="3.65" ry="2.92" fill="#e8bb60" opacity="0.90"/><ellipse cx="68.40" cy="38.16" rx="3.34" ry="2.67" fill="#e2b070" opacity="0.90"/><ellipse cx="72.38" cy="44.46" rx="4.67" ry="3.73" fill="#c97838" opacity="0.90"/><ellipse cx="62.62" cy="37.52" rx="2.69" ry="2.15" fill="#e8bb60" opacity="0.90"/><ellipse cx="77.30" cy="47.84" rx="3.91" ry="3.13" fill="#e2b070" opacity="0.90"/><ellipse cx="81.70" cy="53.62" rx="4.51" ry="3.61" fill="#e0a548" opacity="0.90"/><ellipse cx="55.98" cy="48.56" rx="2.77" ry="2.21" fill="#e8bb60" opacity="0.90"/><ellipse cx="55.55" cy="46.97" rx="3.14" ry="2.51" fill="#c97838" opacity="0.90"/><ellipse cx="72.78" cy="38.92" rx="2.73" ry="2.18" fill="#d08a40" opacity="0.90"/><ellipse cx="55.27" cy="36.89" rx="2.81" ry="2.25" fill="#e0a548" opacity="0.90"/><ellipse cx="61.37" cy="53.20" rx="4.92" ry="3.93" fill="#c97838" opacity="0.90"/><ellipse cx="63.06" cy="33.72" rx="4.65" ry="3.72" fill="#e8bb60" opacity="0.90"/><ellipse cx="63.98" cy="33.02" rx="3.14" ry="2.52" fill="#e2b070" opacity="0.90"/><ellipse cx="60.69" cy="39.25" rx="2.00" ry="1.60" fill="#c84a50" opacity="0.90"/><ellipse cx="56.18" cy="40.54" rx="1.79" ry="1.43" fill="#c84a50" opacity="0.90"/><ellipse cx="63.46" cy="36.40" rx="2.76" ry="2.21" fill="#c84a50" opacity="0.90"/><ellipse cx="68.05" cy="38.23" rx="3.00" ry="2.40" fill="#d06a58" opacity="0.90"/><ellipse cx="72.34" cy="39.77" rx="2.49" ry="1.99" fill="#d06a58" opacity="0.90"/><ellipse cx="71.38" cy="39.15" rx="1.59" ry="1.27" fill="#d06a58" opacity="0.90"/><ellipse cx="71.61" cy="40.50" rx="1.78" ry="1.42" fill="#c84a50" opacity="0.90"/><ellipse cx="73.83" cy="38.67" rx="3.29" ry="2.63" fill="#c84a50" opacity="0.90"/><ellipse cx="56.04" cy="34.33" rx="2.77" ry="2.22" fill="#c84a50" opacity="0.90"/><ellipse cx="63.04" cy="37.61" rx="1.60" ry="1.28" fill="#c84a50" opacity="0.90"/><ellipse cx="69.03" cy="39.45" rx="2.48" ry="1.98" fill="#c84a50" opacity="0.90"/><ellipse cx="64.97" cy="34.56" rx="3.37" ry="2.69" fill="#c84a50" opacity="0.90"/><ellipse cx="67.00" cy="31.00" rx="5" ry="4" fill="#2a5e6a"/><ellipse cx="86.96" cy="51.85" rx="4.21" ry="3.37" fill="#3d6b50" opacity="0.90"/><ellipse cx="94.46" cy="73.69" rx="2.70" ry="2.16" fill="#264a3a" opacity="0.90"/><ellipse cx="65.54" cy="68.20" rx="3.38" ry="2.70" fill="#1f4034" opacity="0.90"/><ellipse cx="57.84" cy="75.49" rx="2.86" ry="2.29" fill="#2f5a45" opacity="0.90"/><ellipse cx="84.85" cy="68.00" rx="2.23" ry="1.79" fill="#264a3a" opacity="0.90"/><ellipse cx="70.59" cy="68.24" rx="4.08" ry="3.26" fill="#456f58" opacity="0.90"/><ellipse cx="82.39" cy="50.35" rx="2.18" ry="1.75" fill="#3d6b50" opacity="0.90"/><ellipse cx="102.63" cy="52.79" rx="2.65" ry="2.12" fill="#1f4034" opacity="0.90"/><ellipse cx="68.54" cy="64.46" rx="3.39" ry="2.72" fill="#1f4034" opacity="0.90"/><ellipse cx="92.36" cy="77.81" rx="3.65" ry="2.92" fill="#3d6b50" opacity="0.90"/><ellipse cx="102.91" cy="76.22" rx="2.05" ry="1.64" fill="#1f4034" opacity="0.90"/><ellipse cx="57.82" cy="64.19" rx="4.98" ry="3.99" fill="#3d6b50" opacity="0.90"/><ellipse cx="73.34" cy="75.66" rx="4.79" ry="3.83" fill="#2f5a45" opacity="0.90"/><ellipse cx="83.07" cy="53.97" rx="3.57" ry="2.86" fill="#3d6b50" opacity="0.90"/><ellipse cx="60.63" cy="72.97" rx="3.53" ry="2.82" fill="#2f5a45" opacity="0.90"/><ellipse cx="89.17" cy="56.48" rx="4.69" ry="3.75" fill="#1f4034" opacity="0.90"/><ellipse cx="73.70" cy="54.45" rx="4.85" ry="3.88" fill="#1f4034" opacity="0.90"/><ellipse cx="74.27" cy="70.36" rx="3.25" ry="2.60" fill="#1f4034" opacity="0.90"/><ellipse cx="69.80" cy="73.53" rx="2.01" ry="1.60" fill="#3d6b50" opacity="0.90"/><ellipse cx="95.96" cy="53.36" rx="4.78" ry="3.82" fill="#2f5a45" opacity="0.90"/><ellipse cx="99.08" cy="58.12" rx="3.12" ry="2.49" fill="#1f4034" opacity="0.90"/><ellipse cx="73.51" cy="74.36" rx="2.23" ry="1.78" fill="#1f4034" opacity="0.90"/><ellipse cx="91.78" cy="73.92" rx="2.84" ry="2.27" fill="#2f5a45" opacity="0.90"/><ellipse cx="95.73" cy="58.00" rx="4.81" ry="3.85" fill="#264a3a" opacity="0.90"/><ellipse cx="102.55" cy="62.21" rx="2.95" ry="2.36" fill="#3d6b50" opacity="0.90"/><ellipse cx="93.26" cy="61.98" rx="2.09" ry="1.67" fill="#1f4034" opacity="0.90"/><ellipse cx="99.67" cy="76.34" rx="3.65" ry="2.92" fill="#2f5a45" opacity="0.90"/><ellipse cx="56.47" cy="70.51" rx="3.35" ry="2.68" fill="#264a3a" opacity="0.90"/><ellipse cx="86.22" cy="58.01" rx="2.15" ry="1.72" fill="#456f58" opacity="0.90"/><ellipse cx="60.37" cy="63.22" rx="3.03" ry="2.42" fill="#3d6b50" opacity="0.90"/><ellipse cx="66.79" cy="70.68" rx="3.96" ry="3.17" fill="#1f4034" opacity="0.90"/><ellipse cx="86.80" cy="58.42" rx="3.67" ry="2.94" fill="#1f4034" opacity="0.90"/><ellipse cx="59.99" cy="68.01" rx="2.23" ry="1.78" fill="#456f58" opacity="0.90"/><ellipse cx="99.30" cy="63.92" rx="2.66" ry="2.13" fill="#3d6b50" opacity="0.90"/><ellipse cx="103.82" cy="62.60" rx="2.42" ry="1.94" fill="#264a3a" opacity="0.90"/><ellipse cx="66.20" cy="54.89" rx="3.67" ry="2.93" fill="#3d6b50" opacity="0.90"/><ellipse cx="65.96" cy="57.23" rx="3.71" ry="2.97" fill="#2f5a45" opacity="0.90"/><ellipse cx="91.48" cy="61.56" rx="3.24" ry="2.59" fill="#456f58" opacity="0.90"/><ellipse cx="64.50" cy="57.57" rx="4.26" ry="3.41" fill="#1f4034" opacity="0.90"/><ellipse cx="67.88" cy="77.10" rx="2.38" ry="1.90" fill="#456f58" opacity="0.90"/><ellipse cx="80.46" cy="72.13" rx="4.55" ry="3.64" fill="#2f5a45" opacity="0.90"/><ellipse cx="67.55" cy="56.96" rx="3.20" ry="2.56" fill="#1f4034" opacity="0.90"/><ellipse cx="75.59" cy="58.74" rx="4.44" ry="3.55" fill="#2f5a45" opacity="0.90"/><ellipse cx="60.36" cy="61.91" rx="4.29" ry="3.43" fill="#1f4034" opacity="0.90"/><ellipse cx="102.41" cy="63.72" rx="2.22" ry="1.78" fill="#456f58" opacity="0.90"/><ellipse cx="96.77" cy="77.22" rx="2.75" ry="2.20" fill="#2f5a45" opacity="0.90"/><ellipse cx="65.19" cy="54.26" rx="4.92" ry="3.93" fill="#2f5a45" opacity="0.90"/><ellipse cx="101.07" cy="70.21" rx="3.94" ry="3.15" fill="#1f4034" opacity="0.90"/><ellipse cx="58.25" cy="71.75" rx="2.00" ry="1.60" fill="#264a3a" opacity="0.90"/><ellipse cx="65.63" cy="75.76" rx="3.94" ry="3.15" fill="#3d6b50" opacity="0.90"/><ellipse cx="102.12" cy="67.54" rx="3.58" ry="2.87" fill="#1f4034" opacity="0.90"/><ellipse cx="88.93" cy="53.14" rx="2.21" ry="1.77" fill="#456f58" opacity="0.90"/><ellipse cx="101.18" cy="55.37" rx="2.78" ry="2.23" fill="#456f58" opacity="0.90"/><ellipse cx="54.06" cy="65.05" rx="4.99" ry="3.99" fill="#3d6b50" opacity="0.90"/><ellipse cx="101.95" cy="68.05" rx="4.65" ry="3.72" fill="#1f4034" opacity="0.90"/><ellipse cx="80.31" cy="65.32" rx="2.09" ry="1.67" fill="#1f4034" opacity="0.90"/><ellipse cx="89.23" cy="58.61" rx="2.07" ry="1.65" fill="#1f4034" opacity="0.90"/><ellipse cx="98.24" cy="68.12" rx="2.24" ry="1.79" fill="#264a3a" opacity="0.90"/><ellipse cx="87.37" cy="75.90" rx="2.68" ry="2.14" fill="#2f5a45" opacity="0.90"/><ellipse cx="88.79" cy="70.11" rx="3.09" ry="2.47" fill="#1f4034" opacity="0.90"/><ellipse cx="108.75" cy="71.10" rx="5.22" ry="4.17" fill="#4e9278" opacity="0.90"/><ellipse cx="108.93" cy="76.98" rx="3.94" ry="3.15" fill="#5ba084" opacity="0.90"/><ellipse cx="109.54" cy="51.53" rx="5.28" ry="4.23" fill="#3f7f66" opacity="0.90"/><ellipse cx="106.62" cy="65.20" rx="4.83" ry="3.86" fill="#5ba084" opacity="0.90"/><ellipse cx="115.64" cy="74.95" rx="3.17" ry="2.54" fill="#5ba084" opacity="0.90"/><ellipse cx="126.13" cy="45.85" rx="3.07" ry="2.46" fill="#5ba084" opacity="0.90"/><ellipse cx="113.97" cy="68.14" rx="3.55" ry="2.84" fill="#66a88c" opacity="0.90"/><ellipse cx="125.56" cy="74.04" rx="5.20" ry="4.16" fill="#4e9278" opacity="0.90"/><ellipse cx="126.36" cy="55.19" rx="3.56" ry="2.85" fill="#66a88c" opacity="0.90"/><ellipse cx="104.77" cy="66.59" rx="4.14" ry="3.31" fill="#3f7f66" opacity="0.90"/><ellipse cx="127.64" cy="59.04" rx="3.33" ry="2.66" fill="#4e9278" opacity="0.90"/><ellipse cx="110.72" cy="55.95" rx="5.87" ry="4.69" fill="#4e9278" opacity="0.90"/><ellipse cx="117.47" cy="69.80" rx="4.14" ry="3.31" fill="#3f7f66" opacity="0.90"/><ellipse cx="123.73" cy="58.70" rx="3.15" ry="2.52" fill="#66a88c" opacity="0.90"/><ellipse cx="108.70" cy="62.41" rx="4.34" ry="3.47" fill="#3f7f66" opacity="0.90"/><ellipse cx="112.74" cy="74.50" rx="3.09" ry="2.47" fill="#66a88c" opacity="0.90"/><ellipse cx="109.95" cy="65.26" rx="4.21" ry="3.37" fill="#66a88c" opacity="0.90"/><ellipse cx="104.84" cy="46.13" rx="5.76" ry="4.61" fill="#3f7f66" opacity="0.90"/><ellipse cx="108.68" cy="46.14" rx="4.82" ry="3.85" fill="#3f7f66" opacity="0.90"/><ellipse cx="110.54" cy="76.56" rx="4.85" ry="3.88" fill="#3f7f66" opacity="0.90"/><ellipse cx="121.91" cy="67.45" rx="5.77" ry="4.62" fill="#3f7f66" opacity="0.90"/><ellipse cx="104.09" cy="69.69" rx="5.75" ry="4.60" fill="#4e9278" opacity="0.90"/><ellipse cx="104.58" cy="51.95" rx="4.43" ry="3.54" fill="#66a88c" opacity="0.90"/><ellipse cx="126.89" cy="57.14" rx="3.75" ry="3.00" fill="#66a88c" opacity="0.90"/><ellipse cx="123.56" cy="48.51" rx="4.49" ry="3.59" fill="#4e9278" opacity="0.90"/><ellipse cx="123.26" cy="69.11" rx="5.47" ry="4.37" fill="#5ba084" opacity="0.90"/><ellipse cx="118.57" cy="55.15" rx="3.96" ry="3.17" fill="#3f7f66" opacity="0.90"/><ellipse cx="122.81" cy="64.25" rx="4.54" ry="3.63" fill="#66a88c" opacity="0.90"/><ellipse cx="122.07" cy="52.41" rx="3.19" ry="2.56" fill="#4e9278" opacity="0.90"/><ellipse cx="115.56" cy="62.52" rx="3.48" ry="2.79" fill="#66a88c" opacity="0.90"/><ellipse cx="103.20" cy="51.83" rx="2.53" ry="2.02" fill="#3f7a62" opacity="0.90"/><ellipse cx="87.00" cy="43.89" rx="3.98" ry="3.18" fill="#5a9276" opacity="0.90"/><ellipse cx="86.16" cy="39.86" rx="2.92" ry="2.34" fill="#b84a58" opacity="0.90"/><ellipse cx="87.64" cy="45.54" rx="3.55" ry="2.84" fill="#3f7a62" opacity="0.90"/><ellipse cx="100.71" cy="42.11" rx="2.56" ry="2.05" fill="#5a9276" opacity="0.90"/><ellipse cx="90.95" cy="48.33" rx="2.40" ry="1.92" fill="#3f7a62" opacity="0.90"/><ellipse cx="86.46" cy="41.30" rx="2.56" ry="2.05" fill="#b84a58" opacity="0.90"/><ellipse cx="86.52" cy="38.91" rx="2.50" ry="2.00" fill="#3f7a62" opacity="0.90"/><ellipse cx="94.18" cy="41.24" rx="3.62" ry="2.89" fill="#b84a58" opacity="0.90"/><ellipse cx="93.13" cy="38.52" rx="2.01" ry="1.61" fill="#3f7a62" opacity="0.90"/><ellipse cx="102.17" cy="50.80" rx="2.08" ry="1.66" fill="#5a9276" opacity="0.90"/><ellipse cx="87.59" cy="38.71" rx="3.20" ry="2.56" fill="#b84a58" opacity="0.90"/><rect x="53.50" y="73.00" width="74.00" height="7.50" fill="#2f6e78" /><rect x="53.50" y="80.50" width="74.00" height="7.50" fill="#d8d2c0" /><ellipse cx="69.00" cy="84.00" rx="7.5" ry="3.5" fill="#3c4a30"/></g><polygon points="53.50,87.50 127.50,87.50 129.00,91.00 152.00,115.50 32.00,115.50 53.50,91.00" fill="url(#p1floor)" /><rect x="24.00" y="95.50" width="135.00" height="1.30" fill="#3f5d80" opacity="0.6"/><rect x="24.00" y="101.00" width="135.00" height="1.30" fill="#3f5d80" opacity="0.6"/><rect x="24.00" y="106.50" width="135.00" height="1.30" fill="#3f5d80" opacity="0.6"/><rect x="24.00" y="112.50" width="135.00" height="1.30" fill="#3f5d80" opacity="0.6"/><polygon points="0.00,91.00 53.50,91.00 32.00,115.50 0.00,115.50" fill="#1b1512" /><polygon points="127.50,91.00 174.00,91.00 174.00,115.50 152.00,115.50" fill="#1f1813" /><ellipse cx="98.80" cy="63.00" rx="3.9" ry="4.6" fill="#141416"/><path d="M0.00 0.00" fill="#141416"/><polygon points="93.50,67.20 103.50,67.20 108.50,69.50 111.50,74.00 113.30,80.00 111.50,86.00 109.80,91.50 107.80,91.00 109.00,85.00 108.80,80.50 106.80,77.50 106.20,82.00 105.50,115.50 91.50,115.50 91.00,94.00 82.00,93.50 82.50,87.50 90.00,84.50 89.80,72.00" fill="#151517" /><polygon points="76.70,93.50 87.30,93.50 87.30,115.50 76.70,115.50" fill="#18181a" /></svg></div>
  <div class="sep" style="top:116px"></div>
  <div class="badge">1</div><div class="lbl">Label</div><div class="dots"><i></i><i></i><i></i></div>
  <div class="sep" style="top:152px"></div>
  <svg class="clk" width="17" height="17" viewBox="0 0 17 17"><circle cx="8.9" cy="8.4" r="6.6" fill="none" stroke="#555" stroke-width="1.45"/><path d="M8.6 4.9v4.1l3.6 2.4" fill="none" stroke="#555" stroke-width="1.4"/></svg><div class="dur">0s</div>
  <div class="sep" style="top:183px"></div>
  <div class="dh">Description</div>
  <div class="dt">Type text here...</div>
</div>
<div class="card sel" style="left:253.3px;top:69.5px">
  <div class="img"><svg width="206.5" height="116" viewBox="0 0 206.5 116" style="position:absolute;left:0;top:0"><defs><linearGradient id="p2sky" x1="0" y1="0" x2="0" y2="1"><stop offset="0" stop-color="#86abc2"/><stop offset="0.5" stop-color="#bccfd9"/><stop offset="1" stop-color="#d3dee3"/></linearGradient><radialGradient id="p2haze" cx="0.45" cy="0.55" r="0.55"><stop offset="0" stop-color="#e2e7e8" stop-opacity="0.9"/><stop offset="1" stop-color="#e2e7e8" stop-opacity="0"/></radialGradient><linearGradient id="p2mt" x1="0" y1="0" x2="0" y2="1"><stop offset="0" stop-color="#8aa5b9"/><stop offset="1" stop-color="#7190a6"/></linearGradient><linearGradient id="p2water" x1="0" y1="0" x2="0" y2="1"><stop offset="0" stop-color="#5399ac"/><stop offset="0.4" stop-color="#438ca2"/><stop offset="1" stop-color="#317b92"/></linearGradient><filter id="p2c" x="-50%" y="-50%" width="200%" height="200%"><feGaussianBlur stdDeviation="3"/></filter><filter id="p2b" x="-5%" y="-5%" width="110%" height="110%"><feGaussianBlur stdDeviation="0.9"/></filter><filter id="p2s" x="-5%" y="-5%" width="110%" height="110%"><feGaussianBlur stdDeviation="0.5"/></filter></defs><rect x="0.00" y="0.00" width="206.50" height="116.00" fill="url(#p2sky)" /><rect x="0.00" y="0.00" width="206.50" height="80.00" fill="url(#p2haze)" /><g filter="url(#p2c)" fill="#e6ecee" opacity="0.5"><ellipse cx="184.5" cy="32.0" rx="14" ry="6"/><ellipse cx="9.5" cy="38.0" rx="10" ry="5"/><ellipse cx="126.5" cy="22.0" rx="12" ry="5"/></g><g filter="url(#p2b)"><path d="M0.00,61.00 L8.50,58.00 L21.50,60.00 L36.50,64.00 L51.50,63.00 L66.50,58.00 L86.50,56.00 L106.50,57.00 L126.50,54.00 L144.50,50.50 L156.50,53.00 L171.50,54.00 L186.50,51.50 L198.50,52.00 L206.50,54.00 L206.50,82.00 L0.00,82.00 Z" fill="url(#p2mt)" opacity="0.9"/><path d="M0.00,70.00 L16.50,71.00 L36.50,73.00 L66.50,71.00 L96.50,72.00 L126.50,71.00 L156.50,69.00 L186.50,70.00 L206.50,69.00 L206.50,82.00 L0.00,82.00 Z" fill="#6d8aa0" opacity="0.8"/><rect x="140.50" y="74.50" width="14.00" height="5.00" fill="#c5d3d8" opacity="0.7"/></g><rect x="0.00" y="80.50" width="206.50" height="35.50" fill="url(#p2water)" /><g opacity="0.5" filter="url(#p2b)"><rect x="71.00" y="96.00" width="5.50" height="15.00" fill="#a8583c" /><rect x="83.50" y="96.00" width="5.00" height="15.00" fill="#a8583c" /><rect x="92.50" y="96.00" width="4.50" height="15.00" fill="#a8583c" /><rect x="112.00" y="96.00" width="5.00" height="15.00" fill="#a8583c" /><rect x="121.00" y="96.00" width="5.50" height="15.00" fill="#a8583c" /><rect x="131.50" y="96.00" width="5.00" height="15.00" fill="#a8583c" /></g><g filter="url(#p2s)"><path d="M61.10,32.00 Q107.00,38.95 153.10,25.20 L152.90,29.80 Q107.20,40.65 61.50,35.30 Z" fill="#4e918a" /><path d="M61.50,35.30 Q107.20,40.65 152.90,29.80 L152.00,34.40 Q107.50,43.60 63.50,39.20 Z" fill="#94503c" /><path d="M148.50,27.00 L153.50,25.00 L153.00,33.00 L149.00,34.50 Z" fill="#3f3b36" opacity="0.7"/><rect x="66.80" y="38.80" width="74.70" height="5.30" fill="#dc6038" /><rect x="99.10" y="42.60" width="9.70" height="8.70" fill="#3c3a37" /><rect x="71.40" y="49.20" width="69.20" height="6.20" fill="#dc6038" /><rect x="71.50" y="54.20" width="69.50" height="1.30" fill="#a8442a" /><polygon points="83.30,42.50 88.70,42.50 89.50,96.50 82.50,96.50" fill="#dc6038" /><polygon points="120.80,42.50 126.30,42.50 127.20,96.50 120.00,96.50" fill="#dc6038" /><rect x="71.00" y="65.50" width="5.50" height="30.50" fill="#dc6038" /><rect x="68.50" y="63.50" width="10.50" height="3.00" fill="#c4553a" /><rect x="92.50" y="65.50" width="5.00" height="30.50" fill="#dc6038" /><rect x="90.00" y="63.50" width="10.00" height="3.00" fill="#c4553a" /><rect x="111.80" y="65.50" width="5.50" height="30.50" fill="#dc6038" /><rect x="109.30" y="63.50" width="10.50" height="3.00" fill="#c4553a" /><rect x="131.30" y="65.50" width="5.50" height="30.50" fill="#dc6038" /><rect x="128.80" y="63.50" width="10.50" height="3.00" fill="#c4553a" /><rect x="76.50" y="70.50" width="16.00" height="3.00" fill="#dc6038" /><rect x="117.30" y="70.50" width="14.00" height="3.00" fill="#dc6038" /><rect x="76.50" y="86.00" width="16.00" height="3.00" fill="#b84c30" /><rect x="117.30" y="86.00" width="14.00" height="3.00" fill="#b84c30" /><rect x="88.50" y="70.50" width="4.00" height="3.00" fill="#dc6038" /><rect x="117.50" y="70.50" width="3.00" height="3.00" fill="#dc6038" /><rect x="71.00" y="94.00" width="5.50" height="3.00" fill="#7a3e2c" /><rect x="82.50" y="94.00" width="7.00" height="3.00" fill="#7a3e2c" /><rect x="92.50" y="94.00" width="5.00" height="3.00" fill="#7a3e2c" /><rect x="111.80" y="94.00" width="5.50" height="3.00" fill="#7a3e2c" /><rect x="120.00" y="94.00" width="7.20" height="3.00" fill="#7a3e2c" /><rect x="131.30" y="94.00" width="5.50" height="3.00" fill="#7a3e2c" /></g></svg></div>
  <div class="sep" style="top:116px"></div>
  <div class="badge">2</div><div class="lbl">Label</div><div class="dots"><i></i><i></i><i></i></div>
  <div class="sep" style="top:152px"></div>
  <svg class="clk" width="17" height="17" viewBox="0 0 17 17"><circle cx="8.9" cy="8.4" r="6.6" fill="none" stroke="#555" stroke-width="1.45"/><path d="M8.6 4.9v4.1l3.6 2.4" fill="none" stroke="#555" stroke-width="1.4"/></svg><div class="dur">0s</div>
  <div class="sep" style="top:183px"></div>
  <div class="dh">Description</div>
  <div class="dt">Type text here...</div>
</div>
<div class="card" style="left:476.8px;top:69.5px">
  <div class="img"><svg class="ph" width="40" height="40" viewBox="0 0 40 40"><g fill="none" stroke="#c6c6c6" stroke-width="1.9"><rect x="5.7" y="5.3" width="22.7" height="23.1" rx="2.6"/><path d="M5.8 20.6l5.5-4.9 5 5 6.9-6.9 4.6 3.8" stroke-linejoin="round"/></g><circle cx="29.05" cy="24.8" r="6.6" fill="#fff"/><circle cx="29.05" cy="24.8" r="5.1" fill="none" stroke="#c6c6c6" stroke-width="1.8"/><circle cx="15.7" cy="13" r="2.1" fill="#c6c6c6"/><path d="M29.05 27.6v-3.6" stroke="#c6c6c6" stroke-width="1.5"/><path d="M26.7 24.3h4.7l-2.35-2.6z" fill="#c6c6c6"/></svg></div>
  <div class="sep" style="top:116px"></div>
  <div class="badge">3</div><div class="lbl">Label</div><div class="dots"><i></i><i></i><i></i></div>
  <div class="sep" style="top:152px"></div>
  <svg class="clk" width="17" height="17" viewBox="0 0 17 17"><circle cx="8.9" cy="8.4" r="6.6" fill="none" stroke="#555" stroke-width="1.45"/><path d="M8.6 4.9v4.1l3.6 2.4" fill="none" stroke="#555" stroke-width="1.4"/></svg><div class="dur">0s</div>
  <div class="sep" style="top:183px"></div>
  <div class="dh">Description</div>
  <div class="dt">Type text here...</div>
</div>
<div class="card" style="left:700.1px;top:69.5px">
  <div class="img"><svg class="ph" width="40" height="40" viewBox="0 0 40 40"><g fill="none" stroke="#c6c6c6" stroke-width="1.9"><rect x="5.7" y="5.3" width="22.7" height="23.1" rx="2.6"/><path d="M5.8 20.6l5.5-4.9 5 5 6.9-6.9 4.6 3.8" stroke-linejoin="round"/></g><circle cx="29.05" cy="24.8" r="6.6" fill="#fff"/><circle cx="29.05" cy="24.8" r="5.1" fill="none" stroke="#c6c6c6" stroke-width="1.8"/><circle cx="15.7" cy="13" r="2.1" fill="#c6c6c6"/><path d="M29.05 27.6v-3.6" stroke="#c6c6c6" stroke-width="1.5"/><path d="M26.7 24.3h4.7l-2.35-2.6z" fill="#c6c6c6"/></svg></div>
  <div class="sep" style="top:116px"></div>
  <div class="badge">4</div><div class="lbl">Label</div><div class="dots"><i></i><i></i><i></i></div>
  <div class="sep" style="top:152px"></div>
  <svg class="clk" width="17" height="17" viewBox="0 0 17 17"><circle cx="8.9" cy="8.4" r="6.6" fill="none" stroke="#555" stroke-width="1.45"/><path d="M8.6 4.9v4.1l3.6 2.4" fill="none" stroke="#555" stroke-width="1.4"/></svg><div class="dur">0s</div>
  <div class="sep" style="top:183px"></div>
  <div class="dh">Description</div>
  <div class="dt">Type text here...</div>
</div>
<div class="card" style="left:29.8px;top:344.5px">
  <div class="img"><svg class="ph" width="40" height="40" viewBox="0 0 40 40"><g fill="none" stroke="#c6c6c6" stroke-width="1.9"><rect x="5.7" y="5.3" width="22.7" height="23.1" rx="2.6"/><path d="M5.8 20.6l5.5-4.9 5 5 6.9-6.9 4.6 3.8" stroke-linejoin="round"/></g><circle cx="29.05" cy="24.8" r="6.6" fill="#fff"/><circle cx="29.05" cy="24.8" r="5.1" fill="none" stroke="#c6c6c6" stroke-width="1.8"/><circle cx="15.7" cy="13" r="2.1" fill="#c6c6c6"/><path d="M29.05 27.6v-3.6" stroke="#c6c6c6" stroke-width="1.5"/><path d="M26.7 24.3h4.7l-2.35-2.6z" fill="#c6c6c6"/></svg></div>
  <div class="sep" style="top:116px"></div>
  <div class="badge">5</div><div class="lbl">Label</div><div class="dots"><i></i><i></i><i></i></div>
  <div class="sep" style="top:152px"></div>
  <svg class="clk" width="17" height="17" viewBox="0 0 17 17"><circle cx="8.9" cy="8.4" r="6.6" fill="none" stroke="#555" stroke-width="1.45"/><path d="M8.6 4.9v4.1l3.6 2.4" fill="none" stroke="#555" stroke-width="1.4"/></svg><div class="dur">0s</div>
  <div class="sep" style="top:183px"></div>
  <div class="dh">Description</div>
  <div class="dt">Type text here...</div>
</div>
<div class="card" style="left:253.3px;top:344.5px">
  <div class="img"><svg class="ph" width="40" height="40" viewBox="0 0 40 40"><g fill="none" stroke="#c6c6c6" stroke-width="1.9"><rect x="5.7" y="5.3" width="22.7" height="23.1" rx="2.6"/><path d="M5.8 20.6l5.5-4.9 5 5 6.9-6.9 4.6 3.8" stroke-linejoin="round"/></g><circle cx="29.05" cy="24.8" r="6.6" fill="#fff"/><circle cx="29.05" cy="24.8" r="5.1" fill="none" stroke="#c6c6c6" stroke-width="1.8"/><circle cx="15.7" cy="13" r="2.1" fill="#c6c6c6"/><path d="M29.05 27.6v-3.6" stroke="#c6c6c6" stroke-width="1.5"/><path d="M26.7 24.3h4.7l-2.35-2.6z" fill="#c6c6c6"/></svg></div>
  <div class="sep" style="top:116px"></div>
  <div class="badge">6</div><div class="lbl">Label</div><div class="dots"><i></i><i></i><i></i></div>
  <div class="sep" style="top:152px"></div>
  <svg class="clk" width="17" height="17" viewBox="0 0 17 17"><circle cx="8.9" cy="8.4" r="6.6" fill="none" stroke="#555" stroke-width="1.45"/><path d="M8.6 4.9v4.1l3.6 2.4" fill="none" stroke="#555" stroke-width="1.4"/></svg><div class="dur">0s</div>
  <div class="sep" style="top:183px"></div>
  <div class="dh">Description</div>
  <div class="dt">Type text here...</div>
</div>
<div class="add">
  <svg style="position:absolute;left:0;top:0" width="207" height="240"><g fill="none" stroke="#a9a9a9" stroke-width="1" stroke-dasharray="4.5 3"><rect x="0.5" y="0.5" width="205" height="300" rx="3"/><path d="M164.5 1V240"/></g></svg>
  <svg class="plus" style="left:72.5px;top:110.5px" width="20" height="20"><rect x="8.75" y="0" width="2.5" height="20" fill="#707070"/><rect x="0" y="8.75" width="20" height="2.5" fill="#707070"/></svg>
  <div class="cnt">6 / 10</div>
  <div class="tri"></div>
</div>
</body></html>
